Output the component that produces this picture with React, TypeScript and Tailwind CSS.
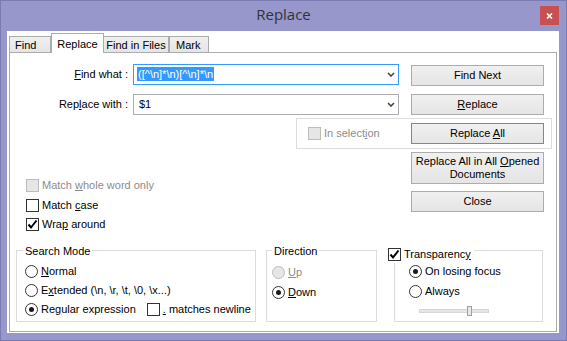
import React from "react";

const FONT = { fontFamily: '"Liberation Sans", Arial, sans-serif' };

function U({ children }: { children: React.ReactNode }) {
  return <span className="underline underline-offset-[1px]">{children}</span>;
}

function CheckBox({ checked, disabled }: { checked?: boolean; disabled?: boolean }) {
  return (
    <span
      className={
        disabled
          ? "flex size-[13px] shrink-0 items-center justify-center border border-[#bcbcbc] bg-[#e6e6e6]"
          : "flex size-[13px] shrink-0 items-center justify-center border border-[#333333] bg-white"
      }
    >
      {checked && (
        <svg viewBox="0 0 11 11" className="size-[11px]">
          <path d="M1.5 5.5 L4 8.5 L9.5 1.5" fill="none" stroke="#000" strokeWidth={2} />
        </svg>
      )}
    </span>
  );
}

function Radio({ checked, disabled }: { checked?: boolean; disabled?: boolean }) {
  return (
    <span
      className={
        disabled
          ? "flex size-[13px] shrink-0 items-center justify-center rounded-full border border-[#bcbcbc] bg-[#e6e6e6]"
          : "flex size-[13px] shrink-0 items-center justify-center rounded-full border border-[#333333] bg-white"
      }
    >
      {checked && <span className="size-[5px] rounded-full bg-[#1a1a1a]" />}
    </span>
  );
}

function Btn({
  children,
  focus,
  tall,
}: {
  children: React.ReactNode;
  focus?: boolean;
  tall?: boolean;
}) {
  return (
    <div
      className={`relative z-10 flex w-[133px] items-center justify-center border bg-gradient-to-b from-[#f0f0f0] to-[#e5e5e5] text-center leading-[13px] text-black ${
        tall ? "h-[32px]" : "h-[21px]"
      } ${focus ? "border-[#3399ff]" : "border-[#acacac]"}`}
    >
      {children}
    </div>
  );
}

function Chevron() {
  return (
    <svg viewBox="0 0 8 5" className="h-[5px] w-[8px]">
      <path d="M1 1 L4 4 L7 1" fill="none" stroke="#444" strokeWidth={1.6} />
    </svg>
  );
}

export default function App() {
  return (
    <div
      className="flex h-[341px] w-[567px] flex-col border border-[#7b7bb3] bg-[#9797cc] text-[11px] text-black"
      style={FONT}
    >
      {/* Title bar */}
      <div className="relative flex h-[30px] shrink-0 items-center justify-center pb-[3px]">
        <span
          className="text-[15px] text-[#333333]"
          style={{ fontFamily: '"Open Sans", "Noto Sans", sans-serif' }}
        >
          Replace
        </span>
        <div className="absolute right-[7px] top-[5px] flex h-[19px] w-[19px] items-center justify-center bg-[#c75050]">
          <svg viewBox="0 0 7 6" className="h-[6px] w-[7px]">
            <path d="M1 0.5 L6 5.5 M6 0.5 L1 5.5" stroke="#fff" strokeWidth={1.6} />
          </svg>
        </div>
      </div>

      {/* Client */}
      <div className="ml-[6px] h-[302px] w-[552px] bg-white">
        <div className="flex h-[21px] items-end pl-[2px] pt-[2px]">
          <div className="flex h-[16px] w-[42px] items-center border border-b-0 border-[#acacac] bg-gradient-to-b from-[#f0f0f0] to-[#e5e5e5] pl-[5px] pt-px">
            Find
          </div>
          <div className="relative z-10 -mb-px flex h-[20px] w-[53px] items-start justify-center border border-b-0 border-[#acacac] bg-white pt-[2px]">
            Replace
          </div>
          <div className="flex h-[16px] w-[65px] items-center justify-center border border-b-0 border-l-0 border-[#acacac] bg-gradient-to-b from-[#f0f0f0] to-[#e5e5e5] pt-px">
            Find in Files
          </div>
          <div className="flex h-[16px] w-[40px] items-center border border-b-0 border-[#acacac] bg-gradient-to-b from-[#f0f0f0] to-[#e5e5e5] pl-[6px] pt-px">
            Mark
          </div>
        </div>

        <div className="relative ml-[2px] h-[280px] w-[548px] border border-[#acacac]">
          {/* In selection frame */}
          <div className="absolute left-[286px] top-[65px] flex h-[31px] w-[256px] items-center border border-[#dcdcdc] pl-[11px] text-[#8c8c8c]">
            <CheckBox disabled />
            <span className="ml-[3px]">
              In select<U>i</U>on
            </span>
          </div>

          <div className="flex">
            {/* Left column */}
            <div className="w-[389px] pt-[11px]">
              <div className="flex items-center">
                <span className="w-[118px] text-right">
                  <U>F</U>ind what :
                </span>
                <div className="ml-[5px] flex h-[21px] w-[266px] items-center border border-[#3399ff] pl-[3px] pr-[3px]">
                  <span className="flex-1">
                    <span className="bg-[#3399ff] px-px py-px text-white">([^\n]*\n)[^\n]*\n</span>
                  </span>
                  <Chevron />
                </div>
              </div>
              <div className="mt-[9px] flex items-center">
                <span className="w-[118px] text-right">
                  Rep<U>l</U>ace with :
                </span>
                <div className="ml-[5px] flex h-[21px] w-[266px] items-center border border-[#abadb3] pl-[5px] pr-[3px]">
                  <span className="flex-1">$1</span>
                  <Chevron />
                </div>
              </div>

              <div className="mt-[64px] flex flex-col pl-[16px]">
                <div className="flex h-[13px] items-center gap-[3px] text-[#8c8c8c]">
                  <CheckBox disabled />
                  <span>
                    Match <U>w</U>hole word only
                  </span>
                </div>
                <div className="mt-[7px] flex h-[13px] items-center gap-[3px]">
                  <CheckBox />
                  <span>
                    Match <U>c</U>ase
                  </span>
                </div>
                <div className="mt-[6px] flex h-[13px] items-center gap-[3px]">
                  <CheckBox checked />
                  <span>
                    Wra<U>p</U> around
                  </span>
                </div>
              </div>
            </div>

            {/* Buttons */}
            <div className="ml-[12px] flex flex-col pt-[12px]">
              <Btn>Find Next</Btn>
              <div className="mt-[8px]">
                <Btn>
                  <span>
                    <U>R</U>eplace
                  </span>
                </Btn>
              </div>
              <div className="mt-[8px]">
                <Btn focus>
                  <span>
                    Replace <U>A</U>ll
                  </span>
                </Btn>
              </div>
              <div className="mt-[8px]">
                <Btn tall>
                  <span>
                    Replace All in All <U>O</U>pened
                    <br />
                    Documents
                  </span>
                </Btn>
              </div>
              <div className="mt-[7px]">
                <Btn>Close</Btn>
              </div>
            </div>
          </div>

          {/* Group boxes */}
          <div className="mt-[19px] flex pl-[6px]">
            <div className="relative h-[72px] w-[240px] border border-[#dcdcdc] pl-[8px] pt-[14px]">
              <span className="absolute left-[6px] top-[-8px] bg-white px-[2px]">Search Mode</span>
              <div className="flex flex-col gap-[6px]">
                <div className="flex h-[13px] items-center gap-[3px]">
                  <Radio />
                  <span>
                    <U>N</U>ormal
                  </span>
                </div>
                <div className="flex h-[13px] items-center gap-[3px]">
                  <Radio />
                  <span>
                    E<U>x</U>tended (\n, \r, \t, \0, \x...)
                  </span>
                </div>
                <div className="flex h-[13px] items-center">
                  <Radio checked />
                  <span className="ml-[3px]">
                    Re<U>g</U>ular expression
                  </span>
                  <span className="ml-[11px]">
                    <CheckBox />
                  </span>
                  <span className="ml-[3px]">
                    <U>.</U> matches newline
                  </span>
                </div>
              </div>
            </div>

            <div className="relative ml-[10px] h-[72px] w-[111px] border border-[#dcdcdc] pl-[5px] pt-[15px]">
              <span className="absolute left-[5px] top-[-8px] bg-white px-[2px]">Direction</span>
              <div className="flex flex-col gap-[7px]">
                <div className="flex h-[13px] items-center gap-[3px] text-[#8c8c8c]">
                  <Radio disabled />
                  <span>
                    <U>U</U>p
                  </span>
                </div>
                <div className="flex h-[13px] items-center gap-[3px]">
                  <Radio checked />
                  <span>
                    <U>D</U>own
                  </span>
                </div>
              </div>
            </div>

            <div className="relative ml-[17px] h-[72px] w-[149px] border border-[#dcdcdc] pl-[14px] pt-[14px]">
              <div className="absolute left-[-7px] top-[-5px] flex items-center gap-[3px] bg-white pr-[3px]">
                <CheckBox checked />
                <span>
                  Transparenc<U>y</U>
                </span>
              </div>
              <div className="flex flex-col gap-[7px]">
                <div className="flex h-[13px] items-center gap-[3px]">
                  <Radio checked />
                  <span>On losing focus</span>
                </div>
                <div className="flex h-[13px] items-center gap-[3px]">
                  <Radio />
                  <span>Always</span>
                </div>
              </div>
              {/* slider */}
              <div className="relative ml-[10px] mt-[8px] h-[9px] w-[70px]">
                <div className="absolute left-0 right-0 top-[3px] h-[4px] border border-[#d6d6d6] bg-[#e7e7e7]" />
                <div className="absolute left-[48px] top-0 h-[10px] w-[5px] border border-[#a0a0a0] bg-[#e8e8e8]" />
              </div>
            </div>
          </div>
        </div>
      </div>
    </div>
  );
}
